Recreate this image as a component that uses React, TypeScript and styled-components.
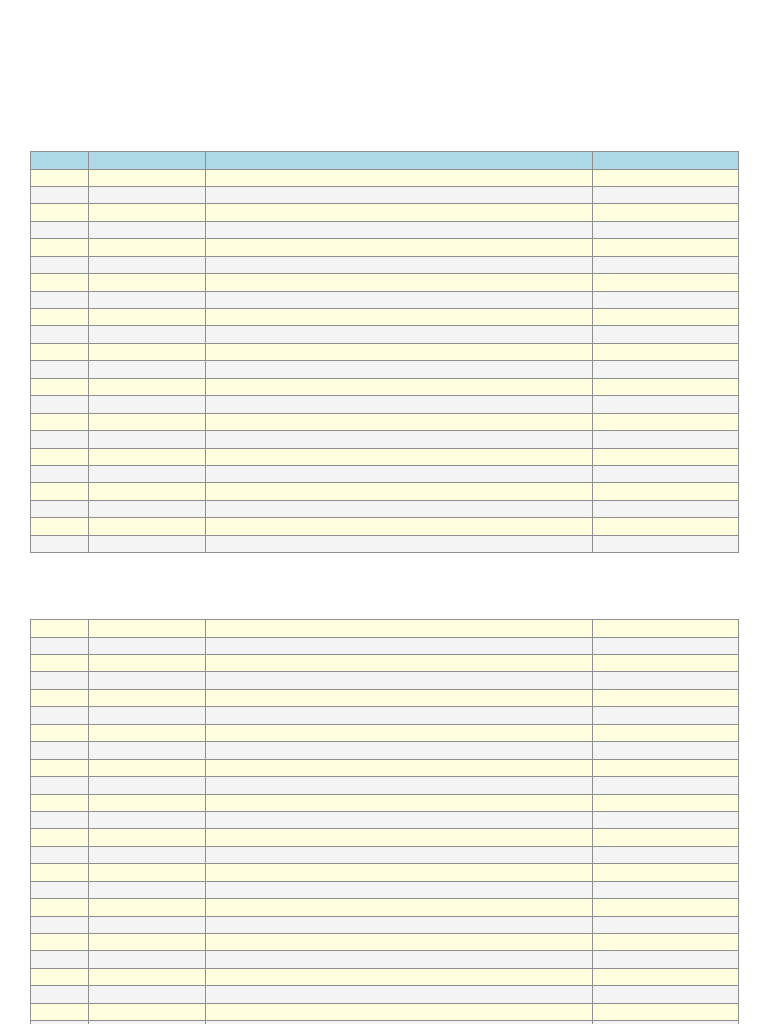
import React from "react";
import styled, { createGlobalStyle } from "styled-components";

const Global = createGlobalStyle`
  html, body { margin: 0; padding: 0; background: #ffffff; }
  body { font-family: "Liberation Sans", Arial, sans-serif; }
`;

const Page = styled.div`
  padding: 151px 0 0 30px;
  display: flex;
  flex-direction: column;
  gap: 66px;
`;

const Table = styled.div`
  width: 709px;
  border-top: 1px solid #8f8f8f;
  border-left: 1px solid #8f8f8f;
  display: flex;
  flex-direction: column;
  box-sizing: border-box;
`;

const Row = styled.div<{ $tone: "head" | "yellow" | "grey"; $h: number }>`
  display: grid;
  grid-template-columns: 58px 117px 387px 146px;
  height: ${(p) => p.$h}px;
  background: ${(p) =>
    p.$tone === "head" ? "#add8e6" : p.$tone === "yellow" ? "#ffffe0" : "#f4f4f4"};
`;

const Cell = styled.div`
  border-right: 1px solid #8f8f8f;
  border-bottom: 1px solid #8f8f8f;
  box-sizing: border-box;
`;

const cols = [0, 1, 2, 3];

function Rows({ count }: { count: number }) {
  return (
    <>
      {Array.from({ length: count }, (_, i) => (
        <Row key={i} $tone={i % 2 === 0 ? "yellow" : "grey"} $h={17.45}>
          {cols.map((c) => (
            <Cell key={c} />
          ))}
        </Row>
      ))}
    </>
  );
}

export default function App() {
  return (
    <>
      <Global />
      <Page>
        <Table>
          <Row $tone="head" $h={17.5}>
            {cols.map((c) => (
              <Cell key={c} />
            ))}
          </Row>
          <Rows count={22} />
        </Table>
        <Table>
          <Rows count={24} />
        </Table>
      </Page>
    </>
  );
}
